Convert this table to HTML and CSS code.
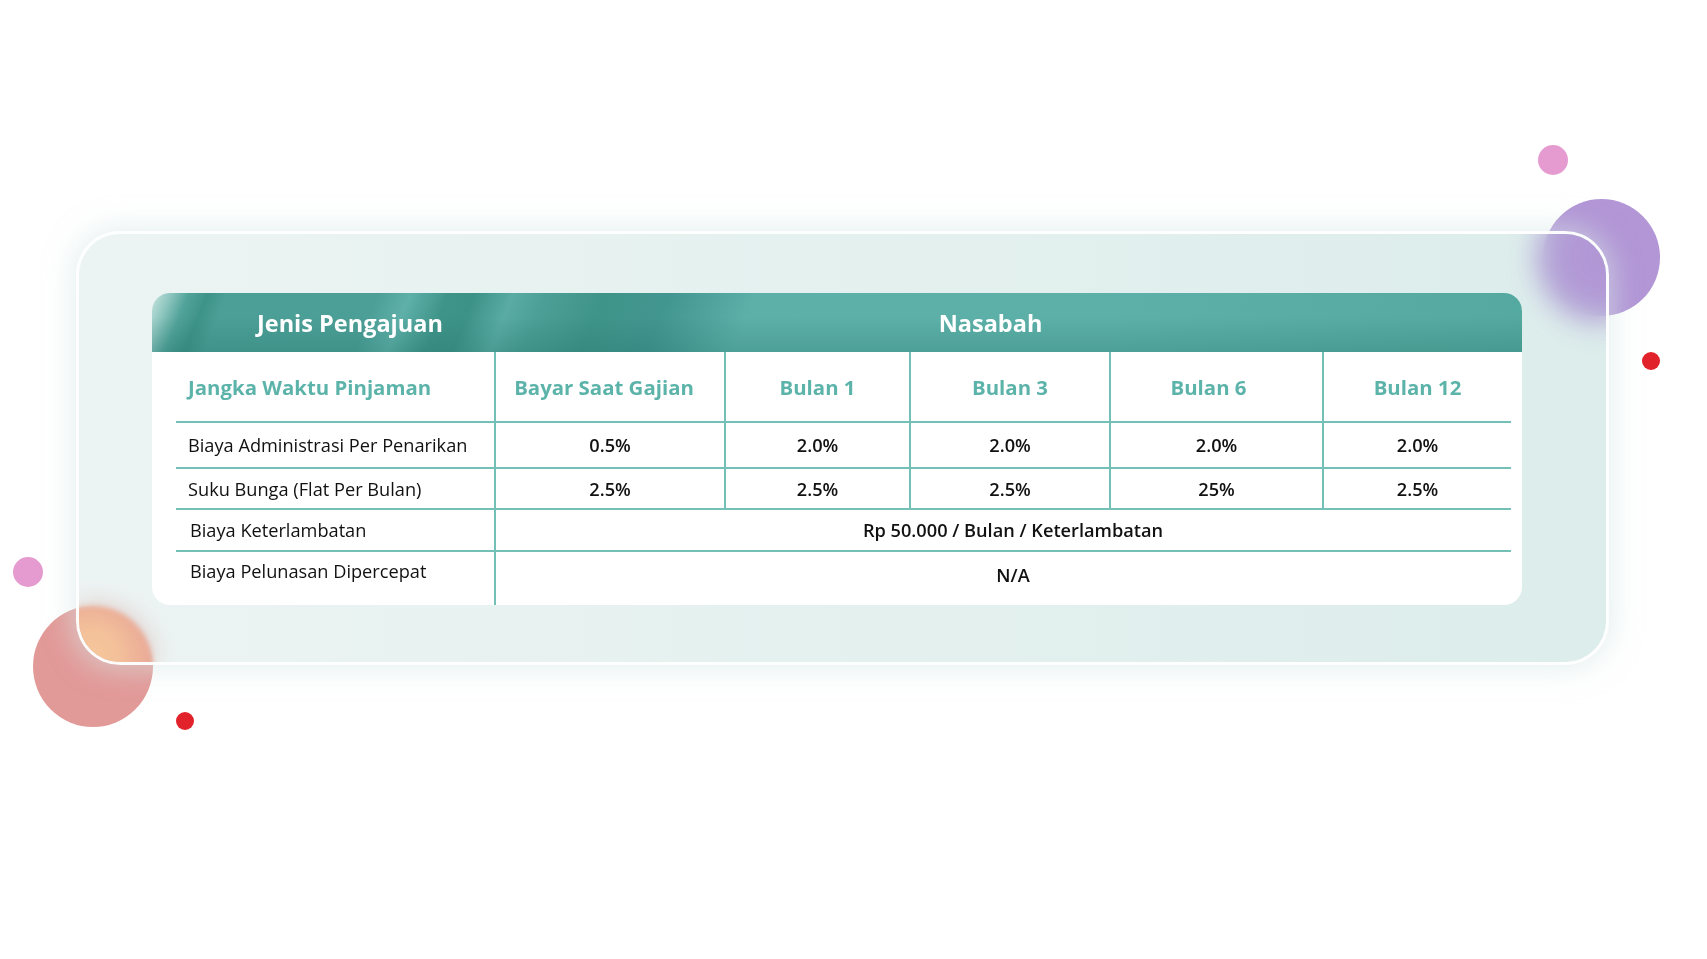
FILE: index.html
```html
<!DOCTYPE html>
<html lang="id">
<head>
<meta charset="utf-8">
<title>Biaya Pinjaman</title>
<link rel="stylesheet" href="styles.css">
</head>
<body>
<div class="stage">
  <span class="dot dot-pink-top"></span>
  <span class="dot dot-purple"></span>
  <span class="dot dot-red-right"></span>
  <span class="dot dot-pink-left"></span>
  <span class="dot dot-salmon"></span>
  <span class="dot dot-red-bottom"></span>

  <div class="frame">
    <span class="glass-purple"></span>
    <span class="glass-peach"></span>
    <div class="card">
      <div class="band">
        <div class="band-left">Jenis Pengajuan</div>
        <div class="band-right">Nasabah</div>
      </div>
      <div class="body">
        <table class="fees">
          <colgroup>
            <col class="c1"><col class="c2"><col class="c3"><col class="c4"><col class="c5"><col class="c6">
          </colgroup>
          <thead>
            <tr class="head-row">
              <th class="label">Jangka Waktu Pinjaman</th>
              <th class="th-bayar">Bayar Saat Gajian</th>
              <th>Bulan 1</th>
              <th>Bulan 3</th>
              <th class="th-b6">Bulan 6</th>
              <th>Bulan 12</th>
            </tr>
          </thead>
          <tbody>
            <tr class="r1">
              <td class="label">Biaya Administrasi Per Penarikan</td>
              <td>0.5%</td><td>2.0%</td><td>2.0%</td><td>2.0%</td><td>2.0%</td>
            </tr>
            <tr class="r2">
              <td class="label">Suku Bunga (Flat Per Bulan)</td>
              <td>2.5%</td><td>2.5%</td><td>2.5%</td><td>25%</td><td>2.5%</td>
            </tr>
            <tr class="r3">
              <td class="label label-b">Biaya Keterlambatan</td>
              <td class="span" colspan="5">Rp 50.000 / Bulan / Keterlambatan</td>
            </tr>
            <tr class="r4">
              <td class="label label-b">Biaya Pelunasan Dipercepat</td>
              <td class="span" colspan="5">N/A</td>
            </tr>
          </tbody>
        </table>
      </div>
    </div>
  </div>
</div>
</body>
</html>
```

FILE: styles.css
```css
* { box-sizing: border-box; }

html, body {
  margin: 0;
  padding: 0;
  background: #ffffff;
}

body {
  font-family: "Open Sans", "Noto Sans", "Liberation Sans", sans-serif;
  color: #111;
}

.stage {
  position: relative;
  width: 1707px;
  height: 959px;
  overflow: hidden;
  padding: 231px 0 0 76px;
}

/* decorative circles */
.dot {
  position: absolute;
  border-radius: 50%;
  display: block;
}
.dot-pink-top { left: 1538px; top: 145px; width: 30px; height: 30px; background: #e59bd0; }
.dot-purple { left: 1543px; top: 199px; width: 117px; height: 117px; background: #b296d6; }
.dot-red-right { left: 1642px; top: 352px; width: 18px; height: 18px; background: #e2222a; }
.dot-pink-left { left: 13px; top: 557px; width: 30px; height: 30px; background: #e59bd0; }
.dot-salmon { left: 33px; top: 606px; width: 120px; height: 121px; background: #e29a98; }
.dot-red-bottom { left: 176px; top: 712px; width: 18px; height: 18px; background: #e2222a; }

/* glass frame */
.frame {
  position: relative;
  width: 1533px;
  height: 434px;
  border: 3px solid rgba(255, 255, 255, 0.95);
  border-radius: 44px;
  padding: 59px 84px 56px 73px;
  overflow: hidden;
  background: linear-gradient(90deg, rgba(217, 233, 231, 0.5) 0%, rgba(185, 219, 215, 0.5) 100%);
  backdrop-filter: blur(14px);
  -webkit-backdrop-filter: blur(14px);
  box-shadow: 0 0 26px 6px rgba(214, 232, 229, 0.55);
}

/* the circles as seen through the frosted glass */
.glass-purple {
  position: absolute;
  left: 1464px;
  top: -35px;
  width: 117px;
  height: 117px;
  border-radius: 50%;
  background: #b296d6;
  filter: blur(18px);
  opacity: 0.95;
  pointer-events: none;
}

.glass-peach {
  position: absolute;
  left: -46px;
  top: 372px;
  width: 120px;
  height: 121px;
  border-radius: 50%;
  background: radial-gradient(circle at 48% 42%, #f6c79b 0%, #f3c09a 30%, #eaab97 62%, #e6a498 85%, rgba(230, 164, 152, 0.6) 100%);
  filter: blur(2.5px);
  pointer-events: none;
}

/* white table card */
.card {
  position: relative;
  width: 1370px;
  height: 312px;
  background: #ffffff;
  border-radius: 18px;
  overflow: hidden;
  display: flex;
  flex-direction: column;
}

.band {
  height: 59px;
  display: flex;
  align-items: center;
  color: #fff;
  font-weight: 700;
  font-size: 23.5px;
  background:
    linear-gradient(180deg, rgba(255,255,255,0) 40%, rgba(20, 100, 90, 0.22) 100%),
    linear-gradient(112deg,
      #c8e4e0 0px, #8cc5be 18px, #52a39a 34px, #3e9389 52px, #4b9f96 70px,
      #4c9f96 210px, #5eb0a8 240px, #3f9489 275px, #3d9288 300px,
      #59aba3 335px, #4c9f96 365px, #3f9489 420px, #429690 480px,
      #5db0a8 560px, #5db0a8 900px, #57aba2 1150px, #52a79e 1370px);
}

.band-left {
  width: 343px;
  padding-left: 105px;
}

.band-right {
  flex: 1;
  text-align: center;
  padding-right: 36px;
}

.body {
  flex: 1;
  padding: 0 11px 0 24px;
}

.fees {
  width: 1335px;
  border-collapse: collapse;
  table-layout: fixed;
}

.c1 { width: 319px; }
.c2 { width: 230px; }
.c3 { width: 185px; }
.c4 { width: 200px; }
.c5 { width: 213px; }
.c6 { width: 188px; }

.fees th, .fees td {
  padding: 0;
  text-align: center;
  border-left: 2px solid #74c0b6;
  border-bottom: 2px solid #74c0b6;
}

.fees tr > :first-child { border-left: none; }

.fees th {
  color: #5bb3a9;
  font-size: 20.4px;
  font-weight: 700;
  height: 70px;
}

.fees th.th-bayar { padding-right: 12px; }
.fees th.th-b6 { padding-right: 16px; }

.fees td {
  font-size: 18.2px;
  font-weight: 600;
  color: #111;
}

.fees td.span { padding-left: 19px; }

.fees .label {
  text-align: left;
  padding-left: 12px;
  font-weight: 400;
}

.fees th.label { font-weight: 700; }
.fees .label-b { padding-left: 14px; }

.r1 td { height: 46px; }
.r2 td { height: 41px; }
.r3 td { height: 42px; }
.r4 td { height: 54px; border-bottom: none; }
.r4 td.label { vertical-align: top; padding-top: 7px; }
.r4 td.span { padding-bottom: 8px; }
```
